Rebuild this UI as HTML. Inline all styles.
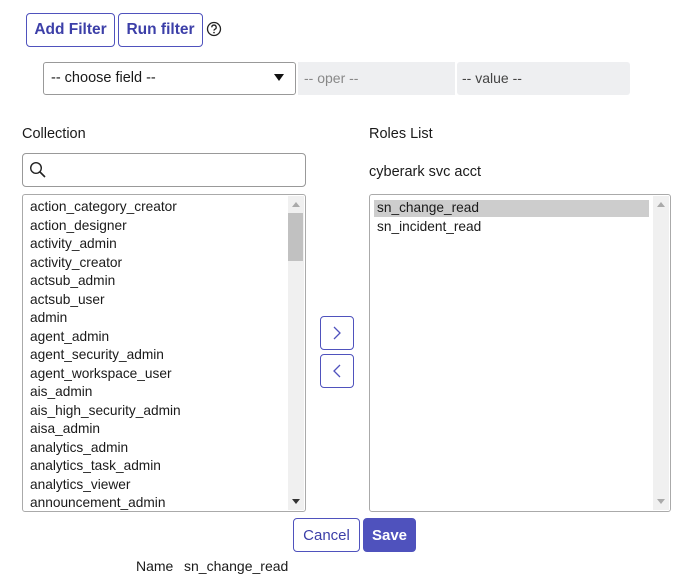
<!DOCTYPE html>
<html><head><style>
*{box-sizing:border-box;margin:0;padding:0}
body{width:700px;height:574px;background:#fff;font-family:"Liberation Sans",sans-serif;font-size:14px;color:#1a1a1a;position:relative;overflow:hidden}
.a{position:absolute}
.btn{position:absolute;border:1px solid #4f52bd;border-radius:4px;color:#3c3fa8;font-size:15.5px;font-weight:bold;display:flex;align-items:center;justify-content:center;background:#fff}
.list{position:absolute;border:1px solid #aaa;border-radius:3px;background:#fff}
.item{position:absolute;left:7px;height:18.5px;line-height:18.5px;white-space:nowrap;font-size:13.7px}
.sb{position:absolute;right:1px;top:1px;bottom:1px;width:16px;background:#f0f0f0}
</style></head><body>
<div class="btn" style="left:26px;top:13px;width:89px;height:34px">Add Filter</div>
<div class="btn" style="left:118px;top:13px;width:85px;height:34px">Run filter</div>
<svg class="a" style="left:206px;top:21px" width="16" height="16" viewBox="0 0 16 16"><circle cx="8" cy="8" r="6.5" fill="none" stroke="#222" stroke-width="1.3"/><path d="M5.8 6.3a2.2 2.2 0 1 1 3 2c-.6.3-.8.6-.8 1.3" fill="none" stroke="#222" stroke-width="1.3"/><circle cx="8" cy="11.6" r=".8" fill="#222"/></svg>
<div class="a" style="left:43px;top:62px;width:253px;height:33px;border:1px solid #999;border-radius:3px;padding-left:7px;line-height:31px;font-size:14.5px">-- choose field --</div>
<svg class="a" style="left:274px;top:74px" width="10" height="7"><path d="M0 0h10L5 7z" fill="#111"/></svg>
<div class="a" style="left:298px;top:62px;width:157px;height:33px;background:#eeeff1;color:#888;line-height:33px;padding-left:6px">-- oper --</div>
<div class="a" style="left:457px;top:62px;width:173px;height:33px;background:#eeeff1;border-radius:3px;color:#444;line-height:33px;padding-left:5px">-- value --</div>
<div class="a" style="left:22px;top:126px;font-size:14.5px">Collection</div>
<div class="a" style="left:369px;top:126px;font-size:14.5px">Roles List</div>
<div class="a" style="left:369px;top:164px;font-size:14.5px">cyberark svc acct</div>
<div class="a" style="left:22px;top:153px;width:284px;height:34px;border:1px solid #999;border-radius:4px"></div>
<svg class="a" style="left:29px;top:161px" width="18" height="18" viewBox="0 0 18 18"><circle cx="7" cy="7" r="5.3" fill="none" stroke="#222" stroke-width="1.4"/><path d="M11 11l5 5" stroke="#222" stroke-width="1.6"/></svg>
<div class="list" style="left:22px;top:194px;width:284px;height:318px;overflow:hidden">
<div class="sb"><div class="a" style="left:0;top:17px;width:15px;height:48px;background:#c1c1c1"></div>
<svg class="a" style="left:4px;top:6px" width="8" height="5"><path d="M0 5L4 0L8 5z" fill="#aaa"/></svg>
<svg class="a" style="left:4px;bottom:6px" width="8" height="5"><path d="M0 0L4 5L8 0z" fill="#333"/></svg></div>
<div class="item" style="top:3px">action_category_creator</div>
<div class="item" style="top:21.5px">action_designer</div>
<div class="item" style="top:40px">activity_admin</div>
<div class="item" style="top:58.5px">activity_creator</div>
<div class="item" style="top:77px">actsub_admin</div>
<div class="item" style="top:95.5px">actsub_user</div>
<div class="item" style="top:114px">admin</div>
<div class="item" style="top:132.5px">agent_admin</div>
<div class="item" style="top:151px">agent_security_admin</div>
<div class="item" style="top:169.5px">agent_workspace_user</div>
<div class="item" style="top:188px">ais_admin</div>
<div class="item" style="top:206.5px">ais_high_security_admin</div>
<div class="item" style="top:225px">aisa_admin</div>
<div class="item" style="top:243.5px">analytics_admin</div>
<div class="item" style="top:262px">analytics_task_admin</div>
<div class="item" style="top:280.5px">analytics_viewer</div>
<div class="item" style="top:299px">announcement_admin</div>
</div>
<div class="btn" style="left:320px;top:316px;width:34px;height:34px;font-weight:normal"><svg width="10" height="14"><path d="M2 1l6 6-6 6" fill="none" stroke="#4f52bd" stroke-width="1.3"/></svg></div>
<div class="btn" style="left:320px;top:354px;width:34px;height:34px;font-weight:normal"><svg width="10" height="14"><path d="M8 1L2 7l6 6" fill="none" stroke="#4f52bd" stroke-width="1.3"/></svg></div>
<div class="list" style="left:369px;top:194px;width:302px;height:318px">
<div class="sb"><svg class="a" style="left:4px;top:6px" width="8" height="5"><path d="M0 5L4 0L8 5z" fill="#aaa"/></svg>
<svg class="a" style="left:4px;bottom:6px" width="8" height="5"><path d="M0 0L4 5L8 0z" fill="#aaa"/></svg></div>
<div class="a" style="left:4px;top:5px;width:275px;height:17px;background:#cdcdcd"></div>
<div class="item" style="top:4px;left:7px">sn_change_read</div>
<div class="item" style="top:22.5px;left:7px">sn_incident_read</div>
</div>
<div class="btn" style="left:293px;top:518px;width:67px;height:34px;font-weight:normal;font-size:15px">Cancel</div>
<div class="btn" style="left:363px;top:518px;width:53px;height:34px;background:#4f52bd;color:#fff;font-size:15px">Save</div>
<div class="a" style="left:136px;top:558px;font-size:14px">Name</div>
<div class="a" style="left:184px;top:558px;font-size:14px">sn_change_read</div>
</body></html>
